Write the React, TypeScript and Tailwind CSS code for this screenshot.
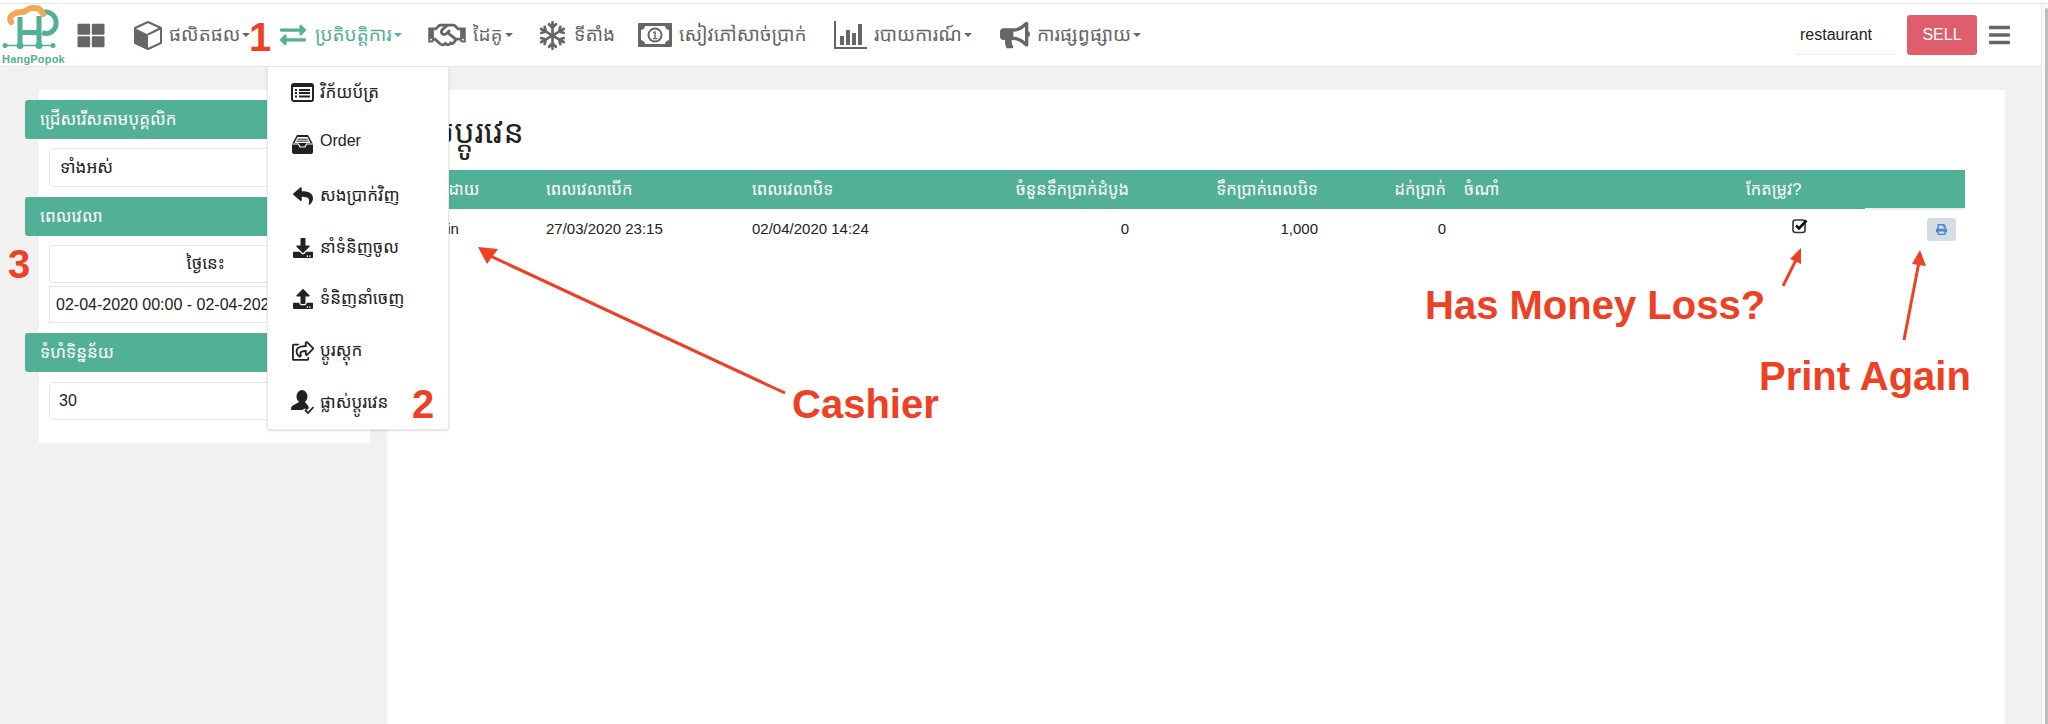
import React from "react";
import {
  FaThLarge, FaExchangeAlt, FaRegHandshake, FaRegSnowflake, FaBullhorn,
  FaReply, FaDownload, FaUpload, FaRegShareSquare, FaPrint, FaBars,
} from "react-icons/fa";

const KH = "font-['Liberation_Sans','Noto_Sans_Khmer','Khmer_OS','Noto_Sans',sans-serif]";

function Caret({ className }: { className?: string }) {
  return <span className={`ml-[2px] inline-block h-0 w-0 border-x-[4px] border-t-[4px] border-x-transparent ${className ?? "border-t-[#666]"}`} />;
}

function CubeIcon() {
  return (
    <svg width="28" height="29" viewBox="0 0 28 29">
      <path d="M14 1L27 7V22L14 28L1 22V7Z" fill="#fff" stroke="#666" strokeWidth="2" strokeLinejoin="round" />
      <path d="M1.5 7.5L14 13.5V28L1.5 22Z" fill="#666" />
      <path d="M14 13.5L27 7" stroke="#666" strokeWidth="2" />
    </svg>
  );
}

function MoneyIcon() {
  return (
    <svg width="34" height="24" viewBox="0 0 34 24">
      <rect width="34" height="24" rx="1" fill="#666" />
      <path d="M7 3H27Q27 6 31 7V17Q27 18 27 21H7Q7 18 3 17V7Q7 6 7 3Z" fill="#fff" />
      <circle cx="17" cy="12" r="7.5" fill="#666" />
      <circle cx="17" cy="12" r="5.5" fill="#fff" />
      <path d="M15 9L17.8 8V15H19.5V16.2H14.8V15H16.4V9.8L15 10.4Z" fill="#666" />
    </svg>
  );
}

function ChartIcon() {
  return (
    <svg width="33" height="28" viewBox="0 0 33 28" fill="#666">
      <rect x="0" y="0" width="2" height="28" />
      <rect x="0" y="26" width="33" height="2" />
      <rect x="6" y="15" width="4" height="9" />
      <rect x="12" y="9" width="4" height="15" />
      <rect x="18" y="12" width="4" height="12" />
      <rect x="24" y="3" width="4" height="21" />
    </svg>
  );
}

function ListIcon() {
  return (
    <svg width="23" height="19" viewBox="0 0 23 19">
      <rect width="23" height="19" rx="3" fill="#222" />
      <rect x="2" y="4" width="19" height="13" fill="#fff" />
      <path d="M4 7H6M4 10H6M4 13.5H6M8 7H19M8 10H19M8 13.5H19" stroke="#222" strokeWidth="2" />
    </svg>
  );
}

function TrayIcon() {
  return (
    <svg width="23" height="20" viewBox="0 0 23 20">
      <path d="M6 1H17L22 10V18Q22 20 20 20H3Q1 20 1 18V10Z" fill="#222" />
      <path d="M6.5 3H16.5L19.5 9H3.5Z" fill="#fff" />
      <path d="M6.5 5.2H16.5M5.5 7.2H17.5" stroke="#222" strokeWidth="1" />
      <path d="M1 10H7.5L9 13H14L15.5 10H22" fill="none" stroke="#fff" strokeWidth="1.2" />
    </svg>
  );
}

function UserCheckIcon() {
  return (
    <svg width="23" height="24" viewBox="0 0 23 24" fill="#222">
      <ellipse cx="11" cy="6.5" rx="5.5" ry="6.5" />
      <path d="M8 12L1 16Q0 17 0 20H11L14 18.5L16 20L18 18Q17 15 14 12Z" />
      <path d="M14 20L17 23L22.5 17" fill="none" stroke="#222" strokeWidth="1.8" />
    </svg>
  );
}

function CheckIcon() {
  return (
    <svg width="17" height="16" viewBox="0 0 17 16" fill="none">
      <rect x="1" y="2" width="12" height="12.5" rx="2.5" stroke="#333" strokeWidth="1.6" />
      <path d="M4 7.5L7 10.5L14.5 2.5" stroke="#111" strokeWidth="2.6" />
    </svg>
  );
}

function Logo() {
  return (
    <div className="flex w-[66px] flex-col items-start">
      <svg width="66" height="47" viewBox="0 0 66 47" fill="none">
        <g stroke="#52b096" strokeWidth="5">
          <path d="M20 12V38M39 11V38M20 27.5H39" />
          <path d="M42 8A10 10 0 0 1 56 17A10 10 0 0 1 42 27.5" />
        </g>
        <path d="M5 40.5H53" stroke="#52b096" strokeWidth="1.6" />
        <g fill="#52b096">
          <circle cx="5" cy="40.5" r="2.5" />
          <circle cx="20" cy="40.5" r="3.5" />
          <circle cx="39" cy="40.5" r="3.5" />
          <circle cx="53" cy="40.5" r="2.5" />
        </g>
        <path d="M11 17C8 11 14 7 23 7C26 7 27 3 32 3C38 3 40 3 43 9" stroke="#f0a956" strokeWidth="6" strokeLinecap="round" />
      </svg>
      <span className="ml-[2px] mt-[1px] text-[11px] font-bold leading-[12px] tracking-[0.2px] text-[#52b096] font-['Liberation_Sans',sans-serif]">HangPopok</span>
    </div>
  );
}

function NavItem({ w, icon, label, caret, active }: { w: string; icon: React.ReactNode; label: string; caret?: boolean; active?: boolean }) {
  return (
    <div className={`flex shrink-0 items-center gap-[7px] text-[19px] ${w} ${active ? "text-[#52b096]" : "text-[#666]"}`}>
      <span className="flex shrink-0 items-center">{icon}</span>
      <span className="flex items-center whitespace-nowrap">
        {label}
        {caret && <Caret className={active ? "border-t-[#52b096]" : "border-t-[#666]"} />}
      </span>
    </div>
  );
}

function MenuItem({ icon, label, latin }: { icon: React.ReactNode; label: string; latin?: boolean }) {
  return (
    <div className="flex h-[51.6px] items-center gap-[6px] pl-[23px] text-[#222]">
      <span className="flex w-[23px] justify-center">{icon}</span>
      <span className={latin ? "mt-[-6px] text-[16px]" : "text-[17px]"}>{label}</span>
    </div>
  );
}

function SideHead({ label }: { label: string }) {
  return <div className="flex h-[39px] items-center rounded-[3px] bg-[#52b096] pl-[15px] text-[17px] text-white">{label}</div>;
}

const Th = "px-[9px] text-[16.5px] font-normal text-white";
const Td = "h-[40px] px-[9px] text-[15px] text-[#222]";

export default function App() {
  return (
    <div className={`relative h-[724px] w-[2048px] overflow-hidden bg-[#f1f1f1] ${KH}`}>
      <div className="h-[3px] bg-white" />
      <div className="h-[1px] bg-[#e8e8e8]" />

      <header className="flex h-[63px] items-center border-b border-[#e6e6e6] bg-white">
        <div className="w-[77px]"><Logo /></div>
        <FaThLarge className="mr-[29px] h-[27px] w-[28px] text-[#666]" />
        <NavItem w="w-[144px]" icon={<CubeIcon />} label="ផលិតផល" caret />
        <NavItem w="w-[150px]" active icon={<FaExchangeAlt className="h-[26px] w-[30px]" />} label="ប្រតិបត្តិការ" caret />
        <NavItem w="w-[110px]" icon={<FaRegHandshake className="h-[30px] w-[38px]" />} label="ដៃគូ" caret />
        <NavItem w="w-[100px]" icon={<FaRegSnowflake className="h-[29px] w-[29px]" />} label="ទីតាំង" />
        <NavItem w="w-[196px]" icon={<MoneyIcon />} label="សៀវភៅសាច់ប្រាក់" />
        <NavItem w="w-[166px]" icon={<ChartIcon />} label="របាយការណ៍" caret />
        <NavItem w="w-[150px]" icon={<FaBullhorn className="h-[28px] w-[30px]" />} label="ការផ្សព្វផ្សាយ" caret />
        <div className="ml-[645px] flex h-[40px] w-[101px] items-center border-b border-[#eee] pl-[5px] text-[16px] text-[#222]">restaurant</div>
        <button className="ml-[11px] h-[40px] w-[70px] rounded-[3px] bg-[#de5f6b] text-[16px] text-white">SELL</button>
        <FaBars className="ml-[11px] h-[24px] w-[23px] text-[#666]" />
      </header>

      <main className="flex items-start pt-[23px]">
        <aside className="ml-[39px] h-[353px] w-[331px] shrink-0 bg-white">
          <div className="ml-[-14px] mr-[8px] pt-[10px]">
            <SideHead label="ជ្រើសរើសតាមបុគ្គលិក" />
            <div className="ml-[24px] mt-[9px] flex h-[39px] items-center rounded-[5px] border border-[#e6e6e6] pl-[10px] text-[17px] text-[#222]">ទាំងអស់</div>
            <div className="mt-[10px]"><SideHead label="ពេលវេលា" /></div>
            <div className="ml-[24px] mt-[9px] flex h-[38px] items-center justify-center rounded-[3px] border border-[#e6e6e6] text-[17px] text-[#222]">ថ្ងៃនេះ</div>
            <div className="ml-[24px] mt-[3px] flex h-[37px] items-center whitespace-nowrap border border-[#e6e6e6] pl-[6px] text-[16px] text-[#222]">02-04-2020 00:00 - 02-04-2020 23:59</div>
            <div className="mt-[10px]"><SideHead label="ទំហំទិន្នន័យ" /></div>
            <div className="ml-[24px] mt-[10px] flex h-[38px] items-center rounded-[5px] border border-[#e6e6e6] pl-[9px] text-[16px] text-[#222]">30</div>
          </div>
        </aside>

        <section className="ml-[17px] h-[634px] w-[1618px] shrink-0 bg-white pl-[22px]">
          <h1 className="ml-[-14px] flex h-[80px] items-end pb-[18px] text-[32px] font-normal leading-[40px] text-[#222]">ផ្លាស់ប្តូរវេន</h1>
          <table className="w-[1556px] table-fixed border-collapse">
            <colgroup>
              <col className="w-[128px]" />
              <col className="w-[206px]" />
              <col className="w-[195px]" />
              <col className="w-[200px]" />
              <col className="w-[189px]" />
              <col className="w-[128px]" />
              <col className="w-[282px]" />
              <col className="w-[128px]" />
              <col className="w-[100px]" />
            </colgroup>
            <thead>
              <tr className="h-[39px] bg-[#52b096]">
                <th className={`${Th} text-left`}>បើកដោយ</th>
                <th className={`${Th} text-left`}>ពេលវេលាបើក</th>
                <th className={`${Th} text-left`}>ពេលវេលាបិទ</th>
                <th className={`${Th} text-right`}>ចំនួនទឹកប្រាក់ដំបូង</th>
                <th className={`${Th} text-right`}>ទឹកប្រាក់ពេលបិទ</th>
                <th className={`${Th} text-right`}>ដក់ប្រាក់</th>
                <th className={`${Th} text-left`}>ចំណាំ</th>
                <th className={`${Th} text-left`}>កែតម្រូវ?</th>
                <th className={Th} />
              </tr>
            </thead>
            <tbody>
              <tr className="align-middle">
                <td className={Td}>admin</td>
                <td className={Td}>27/03/2020 23:15</td>
                <td className={Td}>02/04/2020 14:24</td>
                <td className={`${Td} text-right`}>0</td>
                <td className={`${Td} text-right`}>1,000</td>
                <td className={`${Td} text-right`}>0</td>
                <td className={Td} />
                <td className={`${Td} pb-[6px] pl-[55px]`}><CheckIcon /></td>
                <td className={`${Td} border-t-2 border-[#eee]`}>
                  <div className="flex justify-end">
                    <button className="flex h-[23px] w-[29px] items-center justify-center rounded-[3px] bg-[#d5dce2]"><FaPrint className="h-[11px] w-[11px] text-[#4a86c8]" /></button>
                  </div>
                </td>
              </tr>
            </tbody>
          </table>
        </section>
      </main>

      <div className="absolute left-[267px] top-[67px] z-10 h-[363px] w-[182px] rounded-b-[3px] border border-t-0 border-[#e8e8e8] bg-white shadow-sm">
        <MenuItem icon={<ListIcon />} label="វិក័យប័ត្រ" />
        <MenuItem latin icon={<TrayIcon />} label="Order" />
        <MenuItem icon={<FaReply className="h-[20px] w-[22px]" />} label="សងប្រាក់វិញ" />
        <MenuItem icon={<FaDownload className="h-[20px] w-[22px]" />} label="នាំទំនិញចូល" />
        <MenuItem icon={<FaUpload className="h-[20px] w-[22px]" />} label="ទំនិញនាំចេញ" />
        <MenuItem icon={<FaRegShareSquare className="h-[20px] w-[22px]" />} label="ប្តូរស្តុក" />
        <MenuItem icon={<UserCheckIcon />} label="ផ្លាស់ប្តូរវេន" />
      </div>

      <div className="absolute bottom-0 right-0 top-[4px] z-10 w-[7px] border-l border-[#e8e8e8] bg-[#f9f9f9] pl-[3px] pt-[4px]">
        <div className="h-full rounded-t-[3px] bg-[#bdbdbd]" />
      </div>

      <svg className="absolute left-0 top-0 z-20" width="2048" height="724" fill="none">
        <g stroke="#ee4023" strokeWidth="3">
          <path d="M785 393L486 254" />
          <path d="M1783 286L1797 258" />
          <path d="M1904 340L1919 262" />
        </g>
        <g fill="#ee4023">
          <path d="M478 247L498 249L487 264Z" />
          <path d="M1801 248L1801 264L1790 259Z" />
          <path d="M1920 250L1926 266L1912 264Z" />
        </g>
      </svg>
      <div className="absolute inset-0 z-30 text-[40px] font-bold leading-none text-[#ee4023] font-['Liberation_Sans',sans-serif]">
        <span className="absolute left-[249px] top-[17px]">1</span>
        <span className="absolute left-[412px] top-[384px]">2</span>
        <span className="absolute left-[8px] top-[244px]">3</span>
        <span className="absolute left-[792px] top-[384px]">Cashier</span>
        <span className="absolute left-[1425px] top-[285px]">Has Money Loss?</span>
        <span className="absolute left-[1759px] top-[356px]">Print Again</span>
      </div>
    </div>
  );
}
